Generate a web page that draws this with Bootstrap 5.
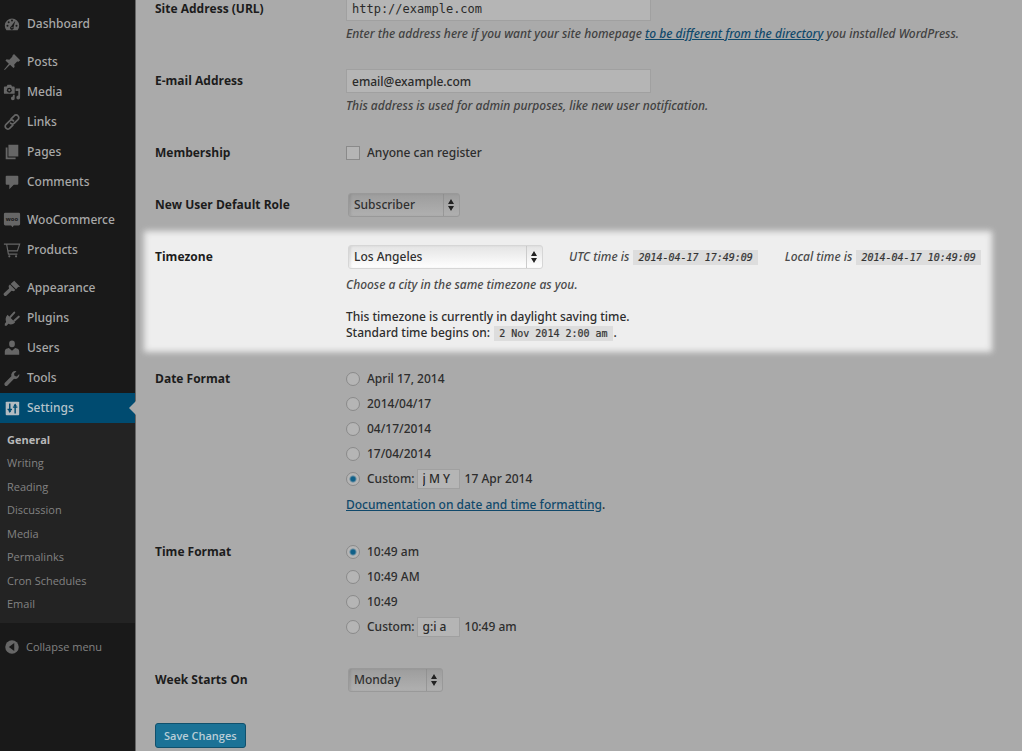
<!DOCTYPE html>
<html lang="en">
<head>
<meta charset="utf-8">
<meta name="viewport" content="width=device-width, initial-scale=1">
<title>General Settings</title>
<link rel="stylesheet" href="https://cdn.jsdelivr.net/npm/bootstrap@5.3.0/dist/css/bootstrap.min.css">
<style>
body{background:#aaa;color:#2d2d2d;font:500 12px/16px "Noto Sans","Open Sans",sans-serif;overflow:hidden}
a{color:#10496b}
/* sidebar */
.side{width:136px;background:#191919;border-right:1px solid #666;padding-top:9px}
.side a{text-decoration:none}
.menu-link{height:30px;padding-left:3px;gap:6px;color:#a8a8a8;white-space:nowrap}
.menu-link svg{width:18px;height:18px;flex:none;fill:#666;color:#666}
.menu-gap{margin-top:8px}
.menu-link.active{background:#004b70;color:#b5c3cb;position:relative}
.menu-link.active svg{fill:#b4bcc1}
.menu-link.active::after{content:"";position:absolute;right:-1px;top:8px;border:7px solid transparent;border-right-color:#aaa;border-left:0}
.submenu{background:#232323;min-height:200px;padding:5px 0 7px 7px;font:11px/16px "Open Sans",sans-serif}
.submenu a{color:#828282}
.submenu a.current{color:#b8b8b8;font-weight:700}
.collapse-btn{margin-top:9px;gap:5px;color:#828282;font:11px/16px "Open Sans",sans-serif;background:none;border:0}
/* form */
.form-area{margin-top:-17px;padding-left:8px;padding-right:30px}
.setting{padding:13px 0 13px 11px;display:flex}
.setting-name{width:191px;flex:none;font:700 12px/26px "Open Sans",sans-serif;color:#1c1c1c}
.line26{min-height:26px}
.line25{height:25px}
.hint{font-style:italic;color:#414141;margin-top:4px}
.box{background:#b5b5b5;border:1px solid #a0a0a0;border-radius:0;color:#2a2a2a;font-size:12px;font-weight:500;line-height:16px;padding:0 5px;height:24px}
.box-long{width:305px}
.box-short{width:43px;height:20px;margin-left:2px;margin-right:5px}
.box-code{font-family:"DejaVu Sans Mono",monospace}
.tick{width:14px;height:14px;margin:0 7px 0 0;flex:none;appearance:none;background:#b5b5b5;border:1px solid #8a8a8a}
.tick[type=radio]{border-radius:50%}
.tick[type=radio]:checked{background:radial-gradient(circle,#0f6089 0 2px,#b5b5b5 4px)}
.picker{appearance:none;height:24px;margin-left:2px;padding:0 5px;border:1px solid #999;border-radius:3px;font-size:12px;font-weight:500;line-height:16px;color:#303030;
 background:url("data:image/svg+xml,%3Csvg xmlns='http://www.w3.org/2000/svg' width='16' height='22'%3E%3Cpath d='M.5 0v22' stroke='%23888' stroke-opacity='.6'/%3E%3Cpath d='M5 10l3-5 3 5zM5 12l3 5 3-5z' fill='%23222'/%3E%3C/svg%3E") right center no-repeat,linear-gradient(#9d9d9d,#b0b0b0);box-shadow:inset 2px 0 2px rgba(0,0,0,.08)}
.picker-role{width:112px}.picker-zone{width:195px}.picker-day{width:95px}
.spot{position:relative;z-index:0;padding-bottom:12px}
.spot::before{content:"";position:absolute;z-index:-1;inset:0 0 1px;background:#eee;filter:blur(3px)}
.spot .hint{margin-top:7px}
.spot .hint,.spot .clock{color:#4a4a4a}
.spot .picker{background-image:url("data:image/svg+xml,%3Csvg xmlns='http://www.w3.org/2000/svg' width='16' height='22'%3E%3Cpath d='M.5 0v22' stroke='%23ccc'/%3E%3Cpath d='M5 10l3-5 3 5zM5 12l3 5 3-5z' fill='%23222'/%3E%3C/svg%3E"),linear-gradient(#e4e4e4,#fff);border-color:#d6d6d6}
.clock{font-style:italic;margin-left:26px;white-space:nowrap}
.stamp{font:10px/15px "DejaVu Sans Mono",monospace;color:#333;background:#ddd;padding:0 5px;margin:0 1px;display:inline-block;-webkit-text-stroke:.2px}
.clock .stamp{font-style:italic}
.doc-line{padding-top:6px}
.time-list{padding-bottom:2px}
.save{height:25px;margin:17px 0 3px 11px;padding:0 8px;background:#1b7296;border:1px solid #10506c;border-radius:3px;color:#b9cdd6;font:600 11px/16px "Open Sans",sans-serif}
</style>
</head>
<body>
<div class="d-flex min-vh-100">
<nav class="side flex-shrink-0" aria-label="Admin">
 <a class="menu-link d-flex align-items-center" href="#"><svg viewBox="0 0 20 20"><path d="M3.8 17a8 8 0 1 1 12.4 0z"/><g fill="#191919"><circle cx="5" cy="12" r="1.1"/><circle cx="6.3" cy="8" r="1.1"/><circle cx="10" cy="6" r="1.1"/><circle cx="15" cy="12" r="1.1"/><path d="M13.7 6.5l-2 7a2 2 0 1 1-2.6-1z"/></g><circle cx="10" cy="14" r=".8"/></svg>Dashboard</a>
 <a class="menu-link menu-gap d-flex align-items-center" href="#"><svg viewBox="0 0 20 20"><path d="M10.4 3l1.8-1.8 6.9 6.9-1.9 1.6-1.5-.2-3.2 3.2.4 2.9-1.3 1.2-3.8-3.8L2 19l-.8-.6 5.300-6.500-3.800-3.700L4 7l3 .4 3.300-3.100z"/></svg>Posts</a>
 <a class="menu-link d-flex align-items-center" href="#"><svg viewBox="0 0 20 20"><path d="M2 4h2l1-2h4l1 2h2q1 0 1 1v6q0 1-1 1H2q-1 0-1-1V5q0-1 1-1z"/><circle cx="7" cy="8" r="2.7" fill="#191919"/><circle cx="7" cy="8" r="1.2"/><path d="M14 6h5v10a2.1 2.1 0 1 1-2-2V9h-3zM11 13h2v4a2.100 2.100 0 1 1-2-2z"/></svg>Media</a>
 <a class="menu-link d-flex align-items-center" href="#"><svg viewBox="0 0 20 20"><g fill="none" stroke="currentColor" stroke-width="1.9" stroke-linecap="round"><path d="M9 6.500l3.400-3.400a2.800 2.800 0 0 1 4.200 0 2.800 2.800 0 0 1 0 4.200l-4 4a2.800 2.800 0 0 1-4.200 0"/><path d="M11 13.500l-3.400 3.400a2.800 2.800 0 0 1-4.200 0 2.800 2.800 0 0 1 0-4.200l4-4a2.800 2.800 0 0 1 4.200 0"/></g></svg>Links</a>
 <a class="menu-link d-flex align-items-center" href="#"><svg viewBox="0 0 20 20"><path d="M6 2h11v13H6zM3 5h2v11h9v2H3z"/></svg>Pages</a>
 <a class="menu-link d-flex align-items-center" href="#"><svg viewBox="0 0 20 20"><path d="M4 3h12q1 0 1 1v8q0 1-1 1h-4l-5 5v-5H4q-1 0-1-1V4q0-1 1-1z"/></svg>Comments</a>
 <a class="menu-link menu-gap d-flex align-items-center" href="#"><svg viewBox="0 0 20 20"><path d="M2.500 2h15q1.500 0 1.500 1.500v11q0 1.500-1.500 1.500H12l-1.500 2L9 16H2.500Q1 16 1 14.500v-11Q1 2 2.500 2z"/><text x="10" y="11.500" text-anchor="middle" font-size="6.500" font-weight="700" fill="#191919">woo</text></svg>WooCommerce</a>
 <a class="menu-link d-flex align-items-center" href="#"><svg viewBox="0 0 20 20"><path d="M1 3.500h17.500l-2.500 7.500H5.500M1.500 3.500h2.500l2 11h10" fill="none" stroke="currentColor" stroke-width="1.300"/><circle cx="7" cy="17" r="1.200"/><circle cx="14.500" cy="17" r="1.200"/></svg>Products</a>
 <a class="menu-link menu-gap d-flex align-items-center" href="#"><svg viewBox="0 0 20 20"><path d="M10.500 3.500L12.500 2 19 8.500l-2.200.300-2.300 2.700-6-6zM7.700 6.200l6 6-1.700 1.500-2.500-.700-5.500 5.200a1.900 1.900 0 0 1-2.700-2.700L6.700 10.500l-.500-2.700z"/></svg>Appearance</a>
 <a class="menu-link d-flex align-items-center" href="#"><svg viewBox="0 0 20 20"><path d="M5 6.500l8.500 8.500q-3.500 3.300-7.500 1.500L4 18.500H2v-2l1.500-2Q1.800 10 5 6.500z"/><path d="M8 9l4.500-5M12.500 13l5-4.500" stroke="currentColor" stroke-width="2.300" stroke-linecap="round"/></svg>Plugins</a>
 <a class="menu-link d-flex align-items-center" href="#"><svg viewBox="0 0 20 20"><ellipse cx="10" cy="5.500" rx="3.200" ry="3.700"/><path d="M6.500 10l3.500 3 3.500-3q4.500.500 4.500 4v3.500H2V14q0-3.500 4.500-4z"/></svg>Users</a>
 <a class="menu-link d-flex align-items-center" href="#"><svg viewBox="0 0 20 20"><path d="M16.700 9.800a4.500 4.500 0 0 1-4.400 1.100L5 18.200a2 2 0 0 1-2.900-2.900l7.200-7.200a4.500 4.500 0 0 1 5.700-5.600l-2.800 2.800.700 2.400 2.400.700 2.800-2.800a4.400 4.400 0 0 1-1.400 4.200z"/></svg>Tools</a>
 <a class="menu-link active d-flex align-items-center" href="#" aria-current="true"><svg viewBox="0 0 20 20"><path d="M4 3h13q1 0 1 1v13q0 1-1 1H4q-1 0-1-1V4q0-1 1-1z"/><path d="M7.500 5v9.500M5 11.500h5M13.500 6v10M11 9h5" stroke="#004b70" stroke-width="1.600"/><path d="M5.500 12.500h4l-2 3zM11.500 8l2-3 2 3z" fill="#004b70"/></svg>Settings</a>
 <div class="submenu d-flex flex-column">
  <a class="current flex-fill d-flex align-items-center" href="#" aria-current="page">General</a>
  <a class="flex-fill d-flex align-items-center" href="#">Writing</a>
  <a class="flex-fill d-flex align-items-center" href="#">Reading</a>
  <a class="flex-fill d-flex align-items-center" href="#">Discussion</a>
  <a class="flex-fill d-flex align-items-center" href="#">Media</a>
  <a class="flex-fill d-flex align-items-center" href="#">Permalinks</a>
  <a class="flex-fill d-flex align-items-center" href="#">Cron Schedules</a>
  <a class="flex-fill d-flex align-items-center" href="#">Email</a>
 </div>
 <button type="button" class="menu-link collapse-btn d-flex align-items-center"><svg viewBox="0 0 20 20"><circle cx="10" cy="10" r="7.500"/><path d="M12.500 5.500v9L6.500 10z" fill="#191919"/></svg>Collapse menu</button>
</nav>

<main class="flex-grow-1">
<form class="form-area">
 <div class="setting"><label class="setting-name" for="url">Site Address (URL)</label>
  <div><div class="line26 d-flex align-items-center"><input class="box box-long box-code" id="url" value="http://example.com"></div>
  <div class="hint">Enter the address here if you want your site homepage <a href="#">to be different from the directory</a> you installed WordPress.</div></div></div>
 <div class="setting"><label class="setting-name" for="mail">E-mail Address</label>
  <div><div class="line26 d-flex align-items-center"><input class="box box-long" id="mail" type="email" value="email@example.com"></div>
  <div class="hint">This address is used for admin purposes, like new user notification.</div></div></div>
 <div class="setting"><div class="setting-name">Membership</div>
  <label class="line26 d-flex align-items-center"><input class="tick" type="checkbox">Anyone can register</label></div>
 <div class="setting"><label class="setting-name" for="role">New User Default Role</label>
  <div class="line26 d-flex align-items-center"><select class="picker picker-role" id="role"><option>Subscriber</option></select></div></div>
 <div class="setting spot"><label class="setting-name" for="zone">Timezone</label>
  <div><div class="line26 d-flex align-items-center"><select class="picker picker-zone" id="zone"><option>Los Angeles</option></select>
   <span class="clock">UTC time is <code class="stamp">2014-04-17 17:49:09</code></span><span class="clock">Local time is <code class="stamp">2014-04-17 10:49:09</code></span></div>
  <div class="hint">Choose a city in the same timezone as you.</div>
  <div class="mt-3">This timezone is currently in daylight saving time.<br>Standard time begins on: <code class="stamp">2 Nov 2014 2:00 am</code>.</div></div></div>
 <div class="setting"><div class="setting-name">Date Format</div>
  <div role="group" aria-label="Date Format">
   <label class="line25 d-flex align-items-center"><input class="tick" type="radio" name="date">April 17, 2014</label>
   <label class="line25 d-flex align-items-center"><input class="tick" type="radio" name="date">2014/04/17</label>
   <label class="line25 d-flex align-items-center"><input class="tick" type="radio" name="date">04/17/2014</label>
   <label class="line25 d-flex align-items-center"><input class="tick" type="radio" name="date">17/04/2014</label>
   <div class="line25 d-flex align-items-center"><label class="d-flex align-items-center"><input class="tick" type="radio" name="date" checked>Custom:</label><input class="box box-short" aria-label="Custom date format" value="j M Y">17 Apr 2014</div>
   <div class="doc-line"><a href="#">Documentation on date and time formatting</a>.</div></div></div>
 <div class="setting"><div class="setting-name">Time Format</div>
  <div class="time-list" role="group" aria-label="Time Format">
   <label class="line25 d-flex align-items-center"><input class="tick" type="radio" name="time" checked>10:49 am</label>
   <label class="line25 d-flex align-items-center"><input class="tick" type="radio" name="time">10:49 AM</label>
   <label class="line25 d-flex align-items-center"><input class="tick" type="radio" name="time">10:49</label>
   <div class="line25 d-flex align-items-center"><label class="d-flex align-items-center"><input class="tick" type="radio" name="time">Custom:</label><input class="box box-short" aria-label="Custom time format" value="g:i a">10:49 am</div></div></div>
 <div class="setting"><label class="setting-name" for="day">Week Starts On</label>
  <div class="line26 d-flex align-items-center"><select class="picker picker-day" id="day"><option>Monday</option></select></div></div>
 <button class="save" type="button">Save Changes</button>
</form>
</main>
</div>
<script src="https://cdn.jsdelivr.net/npm/bootstrap@5.3.0/dist/js/bootstrap.bundle.min.js"></script>
</body>
</html>
